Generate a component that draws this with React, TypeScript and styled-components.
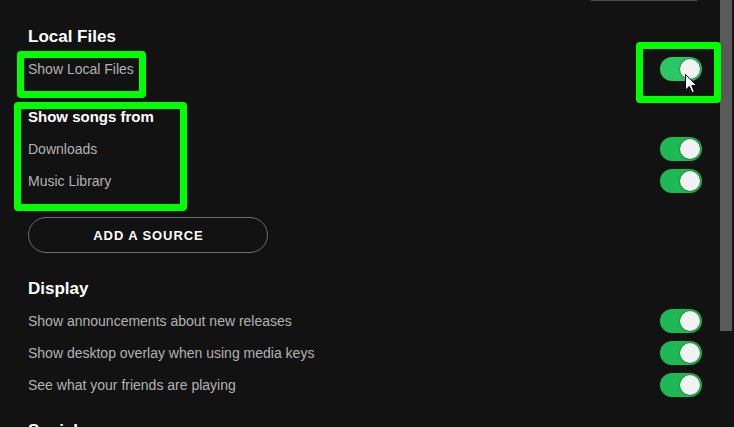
import React from "react";
import styled, { createGlobalStyle } from "styled-components";

const GlobalStyle = createGlobalStyle`
  html, body { margin: 0; padding: 0; background: #121212; }
  body { font-family: "Liberation Sans", Arial, sans-serif; }
  * { box-sizing: border-box; }
`;

const Root = styled.div`
  position: relative;
  width: 734px;
  height: 427px;
  overflow: hidden;
  display: flex;
  background: #121212;
`;

const Content = styled.div`
  flex: 1;
  padding: 0 18px 0 28px;
  display: flex;
  flex-direction: column;
  & > * { flex-shrink: 0; }
`;

const TopRow = styled.div`
  height: 36px;
  margin-top: -33px;
  display: flex;
  align-items: flex-end;
  justify-content: space-between;
`;

const TopLabel = styled.span`
  font-size: 14px;
  line-height: 20px;
  color: #b3b3b3;
  white-space: nowrap;
  margin-bottom: 4px;
`;

const Dropdown = styled.div`
  width: 112px;
  height: 32px;
  margin: 0 2px 2px 0;
  border-radius: 4px;
  background: #282828;
  border: 1px solid #4a4a4a;
`;

const Section = styled.section<{ $gap: number }>`
  margin-top: ${(p) => p.$gap}px;
  display: flex;
  flex-direction: column;
  & > * { flex-shrink: 0; }
`;

const Heading = styled.h2`
  margin: 0 0 4px;
  font-size: 17px;
  line-height: 24px;
  font-weight: 700;
  color: #fff;
`;

const Row = styled.div<{ $gap?: number }>`
  height: 32px;
  margin-top: ${(p) => p.$gap ?? 0}px;
  display: flex;
  align-items: center;
  justify-content: space-between;
`;

const Label = styled.span`
  font-size: 14px;
  line-height: 20px;
  color: #b3b3b3;
  white-space: nowrap;
`;

const SubHeading = styled.span`
  font-size: 15px;
  line-height: 20px;
  font-weight: 700;
  color: #fff;
`;

const Track = styled.span<{ $hover?: boolean }>`
  width: 42px;
  height: 24px;
  border-radius: 12px;
  background: ${(p) => (p.$hover ? "#2ac764" : "#1db954")};
  display: flex;
  align-items: center;
  justify-content: flex-end;
  padding: 0 2px;
`;

const Knob = styled.span`
  width: 20px;
  height: 20px;
  border-radius: 50%;
  background: #f2f2f2;
  box-shadow: 0 0 1.5px 0.5px rgba(0, 60, 20, 0.55);
`;

const OutlineButton = styled.button`
  margin-top: 20px;
  width: 240px;
  height: 36px;
  border-radius: 18px;
  border: 1px solid #6e6e6e;
  background: transparent;
  color: #fff;
  font-family: "Liberation Sans", Arial, sans-serif;
  font-size: 13px;
  font-weight: 700;
  letter-spacing: 0.9px;
  text-indent: 0.9px;
  padding: 0;
`;

const Scrollbar = styled.div`
  width: 14px;
  height: 100%;
  flex-shrink: 0;
  background: #131313;
`;

const Thumb = styled.div`
  width: 12px;
  height: 331px;
  background: #5a5a5a;
`;

const Annotation = styled.div<{ $x: number; $y: number; $w: number; $h: number }>`
  position: absolute;
  left: ${(p) => p.$x}px;
  top: ${(p) => p.$y}px;
  width: ${(p) => p.$w}px;
  height: ${(p) => p.$h}px;
  border: 7px solid #00ff00;
  border-radius: 4px;
  pointer-events: none;
`;

const Cursor = styled.svg`
  position: absolute;
  left: 685px;
  top: 74px;
`;

const Toggle = ({ hover }: { hover?: boolean }) => (
  <Track $hover={hover}>
    <Knob />
  </Track>
);

const SettingRow = ({ label, hover }: { label: string; hover?: boolean }) => (
  <Row>
    <Label>{label}</Label>
    <Toggle hover={hover} />
  </Row>
);

export default function App() {
  return (
    <>
      <GlobalStyle />
      <Root>
        <Content>
          <TopRow>
            <TopLabel>Volume level - Adjust the volume for your environment.</TopLabel>
            <Dropdown />
          </TopRow>

          <Section $gap={22}>
            <Heading>Local Files</Heading>
            <SettingRow label="Show Local Files" hover />
            <Row $gap={16}>
              <SubHeading>Show songs from</SubHeading>
            </Row>
            <SettingRow label="Downloads" />
            <SettingRow label="Music Library" />
            <OutlineButton>ADD A SOURCE</OutlineButton>
          </Section>

          <Section $gap={24}>
            <Heading>Display</Heading>
            <SettingRow label="Show announcements about new releases" />
            <SettingRow label="Show desktop overlay when using media keys" />
            <SettingRow label="See what your friends are playing" />
          </Section>

          <Section $gap={18}>
            <Heading>Social</Heading>
          </Section>
        </Content>
        <Scrollbar>
          <Thumb />
        </Scrollbar>

        <Annotation $x={17} $y={51} $w={129} $h={47} />
        <Annotation $x={14} $y={102} $w={173} $h={109} />
        <Annotation $x={636} $y={42} $w={85} $h={61} />

        <Cursor width="13" height="20" viewBox="0 0 13 20">
          <path
            d="M0.5 0.5 L0.5 16 L4.3 12.4 L7 18.6 L9.4 17.6 L6.8 11.6 L11.8 11.6 Z"
            fill="#fff"
            stroke="#000"
            strokeWidth="1"
            strokeLinejoin="miter"
          />
        </Cursor>
      </Root>
    </>
  );
}
